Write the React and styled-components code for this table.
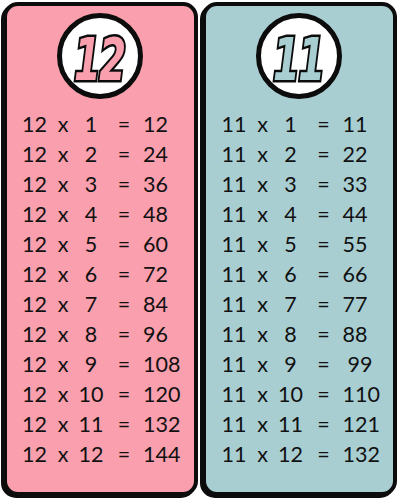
import React from "react";
import styled, { createGlobalStyle } from "styled-components";

const Global = createGlobalStyle`
  html, body { margin: 0; padding: 0; background: #fff; }
  * { box-sizing: border-box; }
`;

const Board = styled.div`
  display: flex;
  gap: 4px;
  width: 400px;
  height: 500px;
  padding: 2px 3px 4px 3px;
`;

const Card = styled.section`
  flex: 1;
  display: flex;
  flex-direction: column;
  align-items: stretch;
  background: ${(p) => p.$bg};
  border: 4px solid #0c0c0c;
  border-radius: 15px;
  box-shadow: -2px 2px 0 #0c0c0c;
  padding: 0 0 0 ${(p) => p.$pad}px;
`;

const Badge = styled.div`
  align-self: center;
  margin: 7px 0 10px ${(p) => -p.$pad}px;
  width: 86px;
  height: 86px;
  border-radius: 50%;
  border: 5px solid #0c0c0c;
  background: #fff;
  display: flex;
  align-items: center;
  justify-content: center;
`;

const BadgeNum = styled.span`
  display: inline-block;
  font-family: "DejaVu Sans Condensed", "DejaVu Sans", sans-serif;
  font-weight: 700;
  font-style: italic;
  font-size: 58px;
  letter-spacing: -2px;
  line-height: 1;
  color: ${(p) => p.$fill};
  -webkit-text-stroke: 5px #0c0c0c;
  paint-order: stroke fill;
  transform: scaleX(0.74);
  margin-top: 8px;
  margin-left: -2px;
`;

const Rows = styled.div`
  display: grid;
  grid-template-columns: 28px 26px 30px 36px 1fr;
  grid-auto-rows: 30px;
  align-items: center;
  font-family: Lato, "Open Sans", sans-serif;
  font-size: 21.5px;
  color: #111;
`;

const Cell = styled.span`
  text-align: ${(p) => (p.$center ? "center" : "left")};
  padding-left: ${(p) => p.$shift || 0}px;
  white-space: nowrap;
`;

const tables = [
  { n: 12, bg: "#fa9fad", pad: 15 },
  { n: 11, bg: "#a8ced2", pad: 16 },
];

function Table({ n, bg, pad }) {
  const rows = Array.from({ length: 12 }, (_, i) => i + 1);
  return (
    <Card $bg={bg} $pad={pad}>
      <Badge $pad={pad}>
        <BadgeNum $fill={bg}>{n}</BadgeNum>
      </Badge>
      <Rows>
        {rows.map((m) => (
          <React.Fragment key={m}>
            <Cell>{n}</Cell>
            <Cell $center>x</Cell>
            <Cell $center>{m}</Cell>
            <Cell $center>=</Cell>
            <Cell $shift={n * m === 99 ? 6 : 1}>{n * m}</Cell>
          </React.Fragment>
        ))}
      </Rows>
    </Card>
  );
}

export default function App() {
  return (
    <>
      <Global />
      <Board>
        {tables.map((t) => (
          <Table key={t.n} {...t} />
        ))}
      </Board>
    </>
  );
}
